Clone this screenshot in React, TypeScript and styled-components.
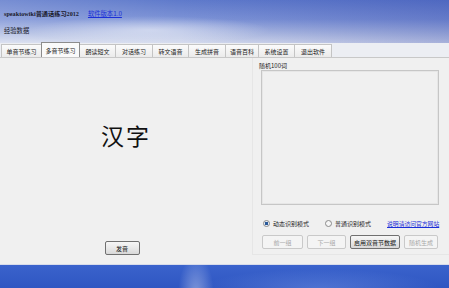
import React from 'react';
import styled, { createGlobalStyle } from 'styled-components';

const GlobalStyle = createGlobalStyle`
  html, body {
    margin: 0;
    padding: 0;
    width: 449px;
    height: 288px;
    overflow: hidden;
  }
  body {
    font-family: "Noto Sans CJK SC", "Liberation Sans", sans-serif;
  }
`;

const Window = styled.div`
  width: 449px;
  height: 288px;
  display: flex;
  flex-direction: column;
  background: #3a5fc8;
`;

const Header = styled.div`
  height: 43px;
  box-sizing: border-box;
  padding: 6px 0 0 4px;
  display: flex;
  flex-direction: column;
  gap: 6px;
  background:
    radial-gradient(ellipse 120px 14px at 150px 30px, rgba(255, 255, 255, 0.45), transparent),
    linear-gradient(90deg, rgba(255, 255, 255, 0.15) 0%, transparent 40%, rgba(30, 50, 160, 0.25) 100%),
    linear-gradient(180deg, #5f7acb 0%, #7d93d6 45%, #b5c1e4 80%, #d6dcee 100%);
`;

const TitleRow = styled.div`
  display: flex;
  align-items: center;
  gap: 9px;
  height: 14px;
  white-space: nowrap;
`;

const AppTitle = styled.span`
  font-family: "Liberation Serif", "Noto Sans CJK SC", serif;
  font-size: 6.2px;
  font-weight: bold;
  color: #1a1a2a;
`;

const Link = styled.a<{ $tone?: string }>`
  font-size: 6.3px;
  color: ${(p) => p.$tone ?? '#1a2fd8'};
  text-decoration: underline;
  cursor: pointer;
  white-space: nowrap;
`;

const SubLabel = styled.span`
  font-size: 6.3px;
  color: #1a1a2a;
`;

const TabBar = styled.div`
  height: 14px;
  display: flex;
  align-items: flex-end;
  background: #eceef3;
  padding-left: 1px;
`;

const Tab = styled.div<{ $active?: boolean; $width: number }>`
  box-sizing: border-box;
  width: ${(p) => p.$width}px;
  height: ${(p) => (p.$active ? 15 : 13)}px;
  margin-top: ${(p) => (p.$active ? -2 : 0)}px;
  display: flex;
  align-items: center;
  justify-content: center;
  white-space: nowrap;
  font-size: 6px;
  color: #222;
  border: 1px solid ${(p) => (p.$active ? '#8c8c8c' : '#c4c4c4')};
  border-bottom: none;
  margin-right: -1px;
  background: ${(p) => (p.$active ? '#fafafa' : 'linear-gradient(180deg, #fbfbfb, #ebebeb)')};
  position: relative;
  z-index: ${(p) => (p.$active ? 1 : 0)};
`;

const Content = styled.div`
  height: 207px;
  display: grid;
  grid-template-columns: 252px 1fr;
  background: #f0f0f0;
  border-top: 1px solid #c8c8c8;
  box-sizing: border-box;
`;

const LeftPane = styled.div`
  display: flex;
  flex-direction: column;
  align-items: center;
  padding-top: 62px;
`;

const BigText = styled.div`
  font-size: 23px;
  letter-spacing: 2px;
  color: #111;
  line-height: 30px;
`;

const Spacer = styled.div`
  flex: 1;
`;

const Button = styled.button<{ $disabled?: boolean; $width: number }>`
  width: ${(p) => p.$width}px;
  height: 14px;
  box-sizing: border-box;
  padding: 0;
  font-family: inherit;
  font-size: 6px;
  white-space: nowrap;
  border-radius: 2px;
  border: 1px solid ${(p) => (p.$disabled ? '#c9c9c9' : '#707070')};
  color: ${(p) => (p.$disabled ? '#a8a8a8' : '#111')};
  background: ${(p) =>
    p.$disabled ? '#f4f4f4' : 'linear-gradient(180deg, #f6f6f6 0%, #e9e9e9 50%, #d8d8d8 100%)'};
  display: flex;
  align-items: center;
  justify-content: center;
`;

const PlayButton = styled(Button)`
  margin-bottom: 9px;
  margin-left: -8px;
`;

const RightPane = styled.div`
  display: flex;
  flex-direction: column;
  padding: 4px 11px 0 6px;
  border-left: 1px solid #e6e6e6;
  margin-bottom: 9px;
  border-bottom: 1px solid #e6e6e6;
`;

const GroupLabel = styled.span`
  font-size: 6px;
  color: #222;
  line-height: 8px;
`;

const ListBox = styled.div`
  margin: 0 0 0 2px;
  height: 135px;
  box-sizing: border-box;
  border: 1px solid #c6c6c6;
  box-shadow: inset 0 0 0 1px #e6e6e6;
  background: #f0f0f0;
`;

const RadioRow = styled.div`
  display: flex;
  align-items: center;
  margin-top: 13px;
  padding-left: 4px;
  height: 10px;
  white-space: nowrap;
`;

const RadioOption = styled.label`
  display: flex;
  align-items: center;
  gap: 3px;
  font-size: 6px;
  color: #222;
  margin-right: 16px;
`;

const RadioDot = styled.span<{ $checked?: boolean }>`
  flex: none;
  width: 5px;
  height: 5px;
  border-radius: 50%;
  border: 1px solid #8a8a8a;
  background: ${(p) =>
    p.$checked ? 'radial-gradient(circle, #2a5a9a 0 1.5px, #e8eef6 2px)' : '#f6f6f6'};
`;

const RadioLink = styled(Link)`
  margin-left: auto;
  font-size: 5.8px;
`;

const ButtonRow = styled.div`
  display: flex;
  gap: 4px;
  margin-top: 7px;
  padding-left: 3px;
`;

const Footer = styled.div`
  flex: 1;
  background:
    radial-gradient(ellipse 18px 40px at 196px 30px, rgba(255, 255, 255, 0.4), transparent),
    radial-gradient(ellipse 120px 20px at 320px 24px, rgba(140, 170, 240, 0.35), transparent),
    linear-gradient(180deg, #3a63cc 0%, #2f56c2 100%);
  border-top: 1px solid #d8dcea;
`;

const tabs = [
  { label: '单音节练习', width: 41 },
  { label: '多音节练习', width: 39, active: true },
  { label: '朗读短文', width: 37 },
  { label: '对话练习', width: 38 },
  { label: '转文语音', width: 37 },
  { label: '生成拼音', width: 38 },
  { label: '语音百科', width: 34 },
  { label: '系统设置', width: 37 },
  { label: '退出软件', width: 38 },
];

export default function App() {
  return (
    <>
      <GlobalStyle />
      <Window>
        <Header>
          <TitleRow>
            <AppTitle>speaktowiki普通话练习2012</AppTitle>
            <Link>软件版本1.0</Link>
          </TitleRow>
          <SubLabel>经验数据</SubLabel>
        </Header>
        <TabBar>
          {tabs.map((t) => (
            <Tab key={t.label} $active={t.active} $width={t.width}>
              {t.label}
            </Tab>
          ))}
        </TabBar>
        <Content>
          <LeftPane>
            <BigText>汉字</BigText>
            <Spacer />
            <PlayButton $width={35}>发音</PlayButton>
          </LeftPane>
          <RightPane>
            <GroupLabel>随机100词</GroupLabel>
            <ListBox />
            <RadioRow>
              <RadioOption>
                <RadioDot $checked />
                动态识别模式
              </RadioOption>
              <RadioOption>
                <RadioDot />
                普通识别模式
              </RadioOption>
              <RadioLink>说明请访问官方网站</RadioLink>
            </RadioRow>
            <ButtonRow>
              <Button $disabled $width={41}>前一组</Button>
              <Button $disabled $width={39}>下一组</Button>
              <Button $width={50}>启用双音节数据</Button>
              <Button $disabled $width={34}>随机生成</Button>
            </ButtonRow>
          </RightPane>
        </Content>
        <Footer />
      </Window>
    </>
  );
}
